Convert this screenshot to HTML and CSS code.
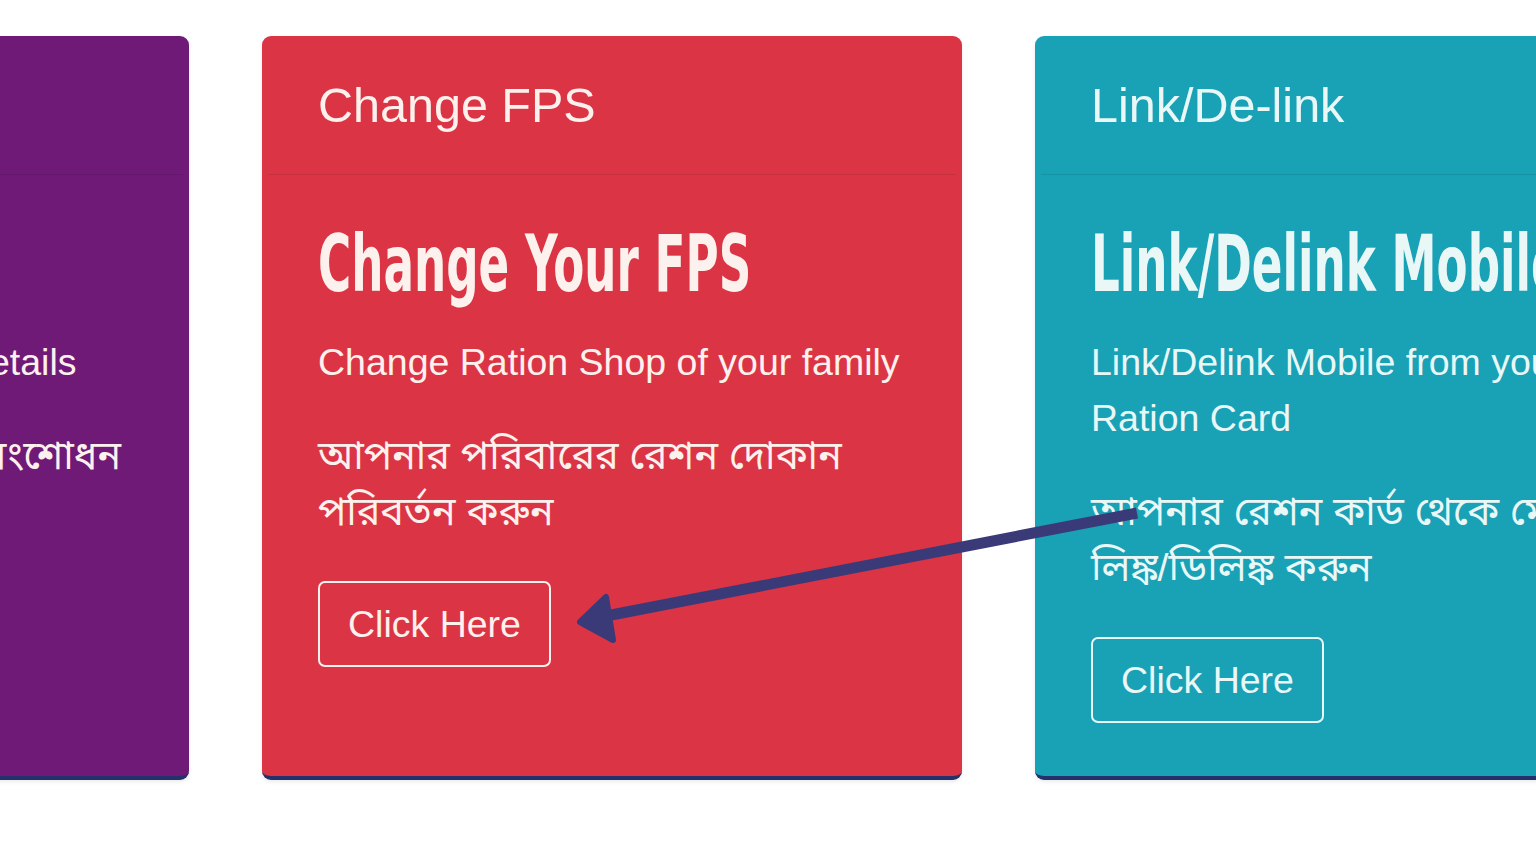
FILE: index.html
```html
<!DOCTYPE html>
<html lang="bn">
<head>
    <meta charset="UTF-8">
    <meta name="viewport" content="width=device-width, initial-scale=1.0">
    <title>Ration Card Services</title>
    <link rel="stylesheet" href="styles.css">
</head>
<body>
    <div class="cards">
        <div class="card card-purple">
            <div class="card-header">Correction</div>
            <div class="card-body">
                <h2 class="card-title">Correction</h2>
                <p>Modify Your Ration Card Details</p>
                <p class="bn">আপনার রেশন কার্ডের তথ্য সংশোধন</p>
                <a class="btn" href="#">Click Here</a>
            </div>
        </div>

        <div class="card card-red">
            <div class="card-header">Change FPS</div>
            <div class="card-body">
                <h2 class="card-title">Change Your FPS</h2>
                <p>Change Ration Shop of your family</p>
                <p class="bn">আপনার পরিবারের রেশন দোকান পরিবর্তন করুন</p>
                <a class="btn" href="#">Click Here</a>
            </div>
        </div>

        <div class="card card-teal">
            <div class="card-header">Link/De-link</div>
            <div class="card-body">
                <h2 class="card-title">Link/Delink Mobile</h2>
                <p>Link/Delink Mobile from your Ration Card</p>
                <p class="bn">আপনার রেশন কার্ড থেকে মোবাইল লিঙ্ক/ডিলিঙ্ক করুন</p>
                <a class="btn" href="#">Click Here</a>
            </div>
        </div>
    </div>

    <!-- pointer drawn over the screenshot -->
    <svg class="pointer" width="1536" height="864" viewBox="0 0 1536 864">
        <line x1="1137" y1="513" x2="606" y2="616" stroke="#3b3a78" stroke-width="11"/>
        <polygon points="580,622 606,597 613,640" fill="#3b3a78" stroke="#3b3a78" stroke-width="6" stroke-linejoin="round"/>
    </svg>
</body>
</html>
```

FILE: styles.css
```css
body {
    margin: 0;
    background: #fff;
    font-family: 'Liberation Sans', Arial, 'Noto Sans Bengali', sans-serif;
    overflow: hidden;
    height: 864px;
    position: relative;
}
.cards {
    display: flex;
    gap: 73px;
    padding-top: 36px;
    margin-left: -511px;
    align-items: stretch;
}
.card {
    flex: 0 0 700px;
    border-radius: 9px;
    border-bottom: 4px solid #25316b;
    box-shadow: 0 2px 4px rgba(0, 0, 0, 0.08);
    color: #fdf1ee;
    overflow: hidden;
}
.card-purple {
    background-color: #701a78;
}
.card-red {
    background-color: #db3545;
}
.card-teal {
    background-color: #19a1b6;
    color: #e9f8f6;
}
.card-header {
    height: 138px;
    display: flex;
    align-items: center;
    padding: 0 50px;
    font-size: 48.5px;
    border-bottom: 1px solid rgba(0, 0, 0, 0.09);
    margin: 0 6px;
}
.card-body {
    padding: 43px 58px 53px 56px;
    font-size: 37.5px;
    line-height: 1.5;
}
.card-title {
    margin: 0 0 22px;
    font-family: 'DejaVu Sans Condensed', sans-serif;
    font-weight: bold;
    font-size: 78px;
    line-height: 1.2;
    white-space: nowrap;
    transform: scaleX(0.645);
    transform-origin: left center;
}
.card-body p {
    margin: 0 0 37px;
}
.bn {
    font-size: 39.5px;
    line-height: 56px;
}
.btn {
    display: inline-block;
    color: inherit;
    text-decoration: none;
    border: 2px solid currentColor;
    border-radius: 7px;
    padding: 13px 28px;
    margin-top: 5px;
}
.pointer {
    position: absolute;
    top: 0;
    left: 0;
    pointer-events: none;
}
```
